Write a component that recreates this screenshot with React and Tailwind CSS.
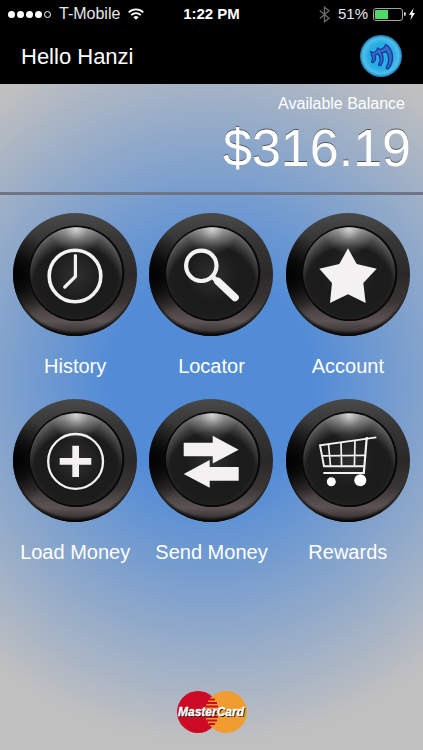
import React from 'react';

const menuItems = [
  { label: 'History', icon: <ClockIcon /> },
  { label: 'Locator', icon: <MagnifierIcon /> },
  { label: 'Account', icon: <StarIcon /> },
  { label: 'Load Money', icon: <PlusIcon /> },
  { label: 'Send Money', icon: <ArrowsIcon /> },
  { label: 'Rewards', icon: <CartIcon /> },
];

// Menu icons, all drawn on the 124x123 disc
function ClockIcon() {
  return (
    <g fill="none" stroke="#f3f1f1" strokeLinecap="round" strokeLinejoin="round">
      <circle cx="62" cy="63" r="25.8" strokeWidth="3.6" />
      <path d="M62.4 42.5V63.5L51.8 74" strokeWidth="3.2" />
    </g>
  );
}

function MagnifierIcon() {
  return (
    <g fill="none" stroke="#f3f1f1" strokeLinecap="round">
      <circle cx="52.3" cy="52.8" r="15.2" strokeWidth="4.2" />
      <path d="M64.5 64.5L70 70" strokeWidth="5" />
      <path d="M69 68.5L86 84.5" strokeWidth="7.6" />
    </g>
  );
}

function StarIcon() {
  return (
    <path
      fill="#f3f1f1"
      d="M62 35.3L70.7 51L90.7 55.7L77.3 70L79.7 90L62 81.3L44 90L46 70L33.3 55.7L53.3 51Z"
    />
  );
}

function PlusIcon() {
  return (
    <g>
      <circle cx="62.6" cy="62.4" r="27.4" fill="none" stroke="#f3f1f1" strokeWidth="2.3" />
      <path fill="#f3f1f1" d="M59.3 46.7H66V59H78.3V65.7H66V78H59.3V65.7H46.7V59H59.3Z" />
    </g>
  );
}

function ArrowsIcon() {
  return (
    <g fill="#f3f1f1">
      <path d="M34.7 43.7H63.7V36.7L89.7 50.7L63.7 64.5V57.3H34.7Z" />
      <path d="M89.7 68H60.7V61L34.7 75L60.7 88.8V81.7H89.7Z" />
    </g>
  );
}

function CartIcon() {
  return (
    <g>
      <g fill="none" stroke="#f3f1f1">
        <path d="M90.3 38.4L34 46.3L38 67.3H78" strokeWidth="1.9" />
        <path d="M80.8 38L77.8 74H37.3" strokeWidth="2.2" />
        <path d="M42.5 45L44.5 67M55 43.5L55.6 67M69 41.5L68.4 67M36 56.8L79 56.4" strokeWidth="1.7" />
      </g>
      <circle cx="45.3" cy="82.7" r="4.5" fill="#fff" />
      <circle cx="74.3" cy="81.3" r="6" fill="#fff" />
    </g>
  );
}

// Gradients shared by every disc
const DiscGradients = () => (
  <svg className="absolute h-0 w-0" aria-hidden="true">
    <defs>
      <linearGradient id="ring" x1="0" y1="0" x2="0" y2="1">
        <stop offset="0" stopColor="#4a4a4a" />
        <stop offset="0.2" stopColor="#383737" />
        <stop offset="0.5" stopColor="#2a2828" />
        <stop offset="0.72" stopColor="#3a3535" />
        <stop offset="0.88" stopColor="#5c5453" />
        <stop offset="1" stopColor="#2c2727" />
      </linearGradient>
      <radialGradient id="ringShade" cx="0" cy="0.5" r="0.36">
        <stop offset="0" stopColor="#000" />
        <stop offset="0.4" stopColor="#000" stopOpacity="0.75" />
        <stop offset="1" stopColor="#000" stopOpacity="0" />
      </radialGradient>
      <radialGradient id="ringEdge" cx="0.5" cy="0.45" r="0.55">
        <stop offset="0.92" stopColor="#000" stopOpacity="0" />
        <stop offset="0.98" stopColor="#000" stopOpacity="0.8" />
        <stop offset="1" stopColor="#000" />
      </radialGradient>
      <radialGradient id="face" cx="0.5" cy="0.52" r="0.52">
        <stop offset="0" stopColor="#2f2f2f" />
        <stop offset="0.55" stopColor="#1b1b1b" />
        <stop offset="0.85" stopColor="#1c1c1c" />
        <stop offset="1" stopColor="#262626" />
      </radialGradient>
      <radialGradient id="rim" cx="0.5" cy="0.7" r="0.7">
        <stop offset="0.7" stopColor="#fff" stopOpacity="0" />
        <stop offset="1" stopColor="#fff" stopOpacity="0.36" />
      </radialGradient>
      <radialGradient id="shine" cx="0.5" cy="0.02" r="0.28">
        <stop offset="0" stopColor="#fff" stopOpacity="0.7" />
        <stop offset="0.45" stopColor="#fff" stopOpacity="0.28" />
        <stop offset="1" stopColor="#fff" stopOpacity="0" />
      </radialGradient>
      <radialGradient id="badge" cx="0.5" cy="0.5" r="0.5">
        <stop offset="0" stopColor="#1fb4ea" />
        <stop offset="0.6" stopColor="#27ace4" />
        <stop offset="0.85" stopColor="#4fbfe8" />
        <stop offset="1" stopColor="#1c7cb4" />
      </radialGradient>
    </defs>
  </svg>
);

const MenuButton = ({ label, icon }) => (
  <button type="button" className="flex flex-col items-center text-xl text-white">
    <svg viewBox="0 0 124 123" className="w-31" aria-hidden="true">
      <ellipse cx="62" cy="61.5" rx="62" ry="61.5" fill="url(#ring)" />
      <ellipse cx="62" cy="61.5" rx="62" ry="61.5" fill="url(#ringShade)" />
      <ellipse cx="62" cy="61.5" rx="62" ry="61.5" fill="url(#ringEdge)" />
      <circle cx="63.5" cy="60.3" r="47.8" fill="#080808" />
      <circle cx="63.2" cy="60.3" r="46" fill="url(#face)" />
      <circle cx="63.2" cy="60.3" r="46" fill="url(#rim)" />
      <circle cx="63.2" cy="60.3" r="46" fill="url(#shine)" />
      {icon}
    </svg>
    <span className="mt-4 leading-7">{label}</span>
  </button>
);

const StatusBar = () => (
  <div className="grid h-7 grid-cols-[1fr_auto_1fr] items-center px-2 text-[15px]">
    <div className="flex items-center">
      <div className="flex gap-[2px]">
        <span className="size-[7px] rounded-full bg-white"></span>
        <span className="size-[7px] rounded-full bg-white"></span>
        <span className="size-[7px] rounded-full bg-white"></span>
        <span className="size-[7px] rounded-full bg-white"></span>
        <span className="size-[7px] rounded-full border border-white"></span>
      </div>
      <span className="ml-2 text-base text-gray-200">T-Mobile</span>
      <svg viewBox="0 0 16 12" className="ml-2 h-3 w-4" fill="none" stroke="#fff" strokeWidth="1.9">
        <path d="M0.8 4.4a10.2 10.2 0 0 1 14.4 0" />
        <path d="M3.3 7.1a6.6 6.6 0 0 1 9.4 0" />
        <path d="M8 11.8L5.4 9.2a3.7 3.7 0 0 1 5.2 0Z" fill="#fff" stroke="none" />
      </svg>
    </div>
    <span className="font-bold">1:22 PM</span>
    <div className="flex items-center justify-end">
      <svg viewBox="0 0 11 17" className="h-[17px] w-[11px]" fill="none" stroke="#6b6b6b" strokeWidth="1.3">
        <path d="M0.8 4.5L10 12.3L5.5 15.8V1.2L10 4.7L0.8 12.5" />
      </svg>
      <span className="ml-2 text-gray-200">51%</span>
      <div className="ml-[5px] h-[13px] w-[30px] rounded-[3px] border border-neutral-400 p-px">
        <div className="h-full w-1/2 rounded-l-[1px] bg-[#4cd964]"></div>
      </div>
      <span className="ml-px h-1 w-[2px] rounded-r bg-neutral-300"></span>
      <svg viewBox="0 0 6 12" className="ml-[3px] h-3 w-[6px]" fill="#fff">
        <path d="M4.6 0L0 6.8H2.5L1.4 12L6 5H3.4Z" />
      </svg>
    </div>
  </div>
);

const BrandBadge = () => (
  <svg viewBox="0 0 42 42" className="size-[42px]">
    <circle cx="21" cy="21" r="21" fill="url(#badge)" />
    <path
      fill="#2f6fc8"
      stroke="#1f3596"
      strokeWidth="1.3"
      strokeLinejoin="round"
      d="M10.5 16.5C12 17.8 13.5 17.5 14.8 17C16.5 16.2 17.2 15 17.8 12.8C18.8 14 20.2 14.8 21.5 14.2C23.8 13.2 25 11.8 25.8 9.5C29.8 12 32.5 17 32.5 22C32.5 27 31 31 28.5 33.5C27.3 34.5 25.6 33.8 26.5 32C29.3 27.5 29.5 21 26.2 16.2C24.8 17.6 23 17.8 21.2 17.3C23.6 20.5 24 26.5 21 30C19.8 31.2 18 30.5 18.8 28.8C20.6 25.5 20.2 21.5 17.8 18.8C17 19.6 16 20 14.9 20C16 22.5 15.5 25.5 13.6 27.2C12.5 28 11.2 27.2 11.8 25.9C13 23.8 12.8 21.8 11.3 20.2C12 19 11.5 17.8 10.5 16.5Z"
    />
  </svg>
);

const MasterCardLogo = () => (
  <svg viewBox="0 0 70 42" className="h-[42px] w-[70px]" role="img" aria-label="MasterCard">
    <circle cx="21" cy="21" r="21" fill="#cc0a24" />
    <circle cx="49" cy="21" r="21" fill="#f09c30" />
    <path
      d="M32 8.5H38M30 12H40M29 15.5H41M28 19H42M28 22.5H42M29 26H41M30 29.5H40M32 33H38"
      stroke="#cc0a24"
      strokeWidth="1.8"
    />
    <g fontSize="12" fontWeight="bold" fontStyle="italic">
      <text x="2" y="26" fill="#1a1a1a">MasterCard</text>
      <text x="1" y="25" fill="#fff" stroke="#fff" strokeWidth="0.3">MasterCard</text>
    </g>
  </svg>
);

const App = () => {
  return (
    <div className="flex min-h-screen flex-col bg-[radial-gradient(ellipse_82%_48%_at_50%_51%,#538cd6_0%,#538cd6_30%,#c0c0c0_100%)] font-['Liberation_Sans',Arial,sans-serif] text-white">
      <DiscGradients />

      {/* Status bar and greeting */}
      <header className="bg-black">
        <StatusBar />
        <div className="flex h-14 items-center justify-between px-[21px]">
          <h1 className="text-[22px]">Hello Hanzi</h1>
          <button type="button" aria-label="Pay">
            <BrandBadge />
          </button>
        </div>
      </header>

      {/* Balance */}
      <section className="border-b-[3px] border-[#6f7587] pt-2 pr-3 pb-3 text-right">
        <p className="pr-[6px] text-base leading-6">Available Balance</p>
        <p className="text-[52px] leading-16 [text-shadow:0_-1px_0_#555]">$316.19</p>
      </section>

      {/* Menu */}
      <nav className="grid grid-cols-3 gap-y-[19px] px-[7px] pt-[18px]">
        {menuItems.map((item) => (
          <MenuButton key={item.label} label={item.label} icon={item.icon} />
        ))}
      </nav>

      <footer className="mt-auto flex justify-center pt-6 pb-[17px]">
        <MasterCardLogo />
      </footer>
    </div>
  );
};

export default App;
